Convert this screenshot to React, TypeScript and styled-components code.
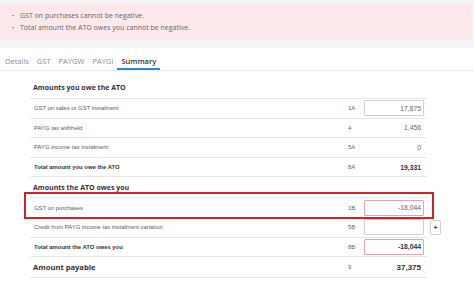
import styled, { createGlobalStyle } from 'styled-components'

const GlobalStyle = createGlobalStyle`
  html, body {
    margin: 0;
    padding: 0;
    background: #fff;
  }
  body {
    width: 474px;
    height: 285px;
    overflow: hidden;
    font-family: "Open Sans", "Liberation Sans", Arial, sans-serif;
  }
`

type Kind = 'input' | 'error' | 'plain'

type Item = {
  label: string
  code: string
  value: string
  kind: Kind
  total?: boolean
  plus?: boolean
  highlight?: boolean
}

const owe: Item[] = [
  { label: 'GST on sales or GST instalment', code: '1A', value: '17,875', kind: 'input' },
  { label: 'PAYG tax withheld', code: '4', value: '1,456', kind: 'plain' },
  { label: 'PAYG income tax instalment', code: '5A', value: '0', kind: 'plain' },
  { label: 'Total amount you owe the ATO', code: '8A', value: '19,331', kind: 'plain', total: true },
]

const owed: Item[] = [
  { label: 'GST on purchases', code: '1B', value: '-18,044', kind: 'error', highlight: true },
  { label: 'Credit from PAYG income tax instalment variation', code: '5B', value: '', kind: 'input', plus: true },
  { label: 'Total amount the ATO owes you', code: '8B', value: '-18,044', kind: 'error', total: true },
]

const tabs = ['Details', 'GST', 'PAYGW', 'PAYGI', 'Summary']

export default function App() {
  const renderRow = (item: Item) => (
    <Row key={item.code}>
      <RowLine>
        {item.highlight && <Highlight />}
        <Label $bold={item.total}>{item.label}</Label>
        <Code>{item.code}</Code>
        <ValueCell>
          {item.kind === 'plain' ? (
            <Plain $bold={item.total}>{item.value}</Plain>
          ) : (
            <Field $error={item.kind === 'error'} $bold={item.total}>
              {item.value}
            </Field>
          )}
        </ValueCell>
      </RowLine>
      <Side>{item.plus && <PlusButton>+</PlusButton>}</Side>
    </Row>
  )

  return (
    <Page>
      <GlobalStyle />
      <AlertArea>
        <Alert>
          <AlertList>
            <li>GST on purchases cannot be negative.</li>
            <li>Total amount the ATO owes you cannot be negative.</li>
          </AlertList>
        </Alert>
      </AlertArea>

      <TabBar>
        {tabs.map((t) => (
          <Tab key={t} $active={t === 'Summary'}>
            {t}
          </Tab>
        ))}
      </TabBar>

      <Panel>
        <Row>
          <Heading>Amounts you owe the ATO</Heading>
          <Side />
        </Row>
        {owe.map(renderRow)}
        <Row>
          <Heading $tall>Amounts the ATO owes you</Heading>
          <Side />
        </Row>
        {owed.map(renderRow)}
        <Row>
          <RowLine $tall>
            <BigLabel>Amount payable</BigLabel>
            <Code>9</Code>
            <ValueCell>
              <BigValue>37,375</BigValue>
            </ValueCell>
          </RowLine>
          <Side />
        </Row>
      </Panel>
    </Page>
  )
}

const Page = styled.div`
  width: 474px;
  height: 285px;
  overflow: hidden;
  background: #fff;
`

const AlertArea = styled.div`
  background: #f3f5f7;
  padding: 3px 2px 8px 0;
`

const Alert = styled.div`
  background: #fde9eb;
  height: 37px;
  display: flex;
  align-items: center;
`

const AlertList = styled.ul`
  margin: 0;
  padding: 0 0 0 12px;
  list-style: none;
  font-size: 7px;
  line-height: 11px;
  color: #666;

  li::before {
    content: '•';
    display: inline-block;
    width: 8px;
    font-size: 6px;
  }
`

const TabBar = styled.div`
  display: flex;
  padding-left: 1px;
  border-bottom: 1px solid #e6e8ea;
`

const Tab = styled.div<{ $active?: boolean }>`
  box-sizing: border-box;
  height: 22px;
  padding: 6px 4px 0;
  line-height: 14px;
  font-size: 7.5px;
  color: ${(p) => (p.$active ? '#333' : '#8a8f94')};
  font-weight: ${(p) => (p.$active ? 600 : 400)};
  border-bottom: 2px solid ${(p) => (p.$active ? '#2d8ccf' : 'transparent')};
`

const Panel = styled.div`
  margin: 6px 0 0 30px;
  width: 411px;
  display: flex;
  flex-direction: column;
`

const Row = styled.div`
  display: flex;
`

const Side = styled.div`
  width: 14px;
  display: flex;
  justify-content: flex-end;
  align-items: center;
`

const Heading = styled.div<{ $tall?: boolean }>`
  flex: 1;
  box-sizing: border-box;
  height: ${(p) => (p.$tall ? '21px' : '22px')};
  border-bottom: 1px solid #e6e6e6;
  padding-left: 3px;
  display: flex;
  align-items: center;
  font-size: 7px;
  font-weight: 700;
  color: #333;
`

const RowLine = styled.div<{ $tall?: boolean }>`
  position: relative;
  flex: 1;
  box-sizing: border-box;
  height: ${(p) => (p.$tall ? '21px' : '19.6px')};
  border-bottom: 1px solid #e6e6e6;
  display: flex;
  align-items: center;
`

const Highlight = styled.div`
  position: absolute;
  left: -6px;
  right: -7px;
  top: -6px;
  bottom: -2px;
  border: 2px solid #d4202c;
  pointer-events: none;
`

const Label = styled.div<{ $bold?: boolean }>`
  flex: 1;
  padding-left: 4px;
  font-family: "Liberation Sans", Arial, sans-serif;
  font-size: 5.9px;
  font-weight: ${(p) => (p.$bold ? 700 : 400)};
  color: ${(p) => (p.$bold ? '#333' : '#5a5a5a')};
`

const BigLabel = styled.div`
  flex: 1;
  padding-left: 3px;
  font-size: 7.6px;
  font-weight: 700;
  color: #333;
`

const Code = styled.div`
  width: 16px;
  padding-left: 1px;
  font-family: "Liberation Sans", Arial, sans-serif;
  font-size: 6px;
  color: #666;
`

const ValueCell = styled.div`
  width: 60px;
  margin-right: 3px;
  display: flex;
  justify-content: flex-end;
`

const Plain = styled.div<{ $bold?: boolean }>`
  padding-right: 3px;
  font-family: "Liberation Sans", Arial, sans-serif;
  font-size: 6.8px;
  font-weight: ${(p) => (p.$bold ? 700 : 400)};
  color: ${(p) => (p.$bold ? '#333' : '#666')};
`

const Field = styled.div<{ $error?: boolean; $bold?: boolean }>`
  box-sizing: border-box;
  width: 60px;
  height: 16px;
  border: 1px solid ${(p) => (p.$error ? '#e7a2aa' : '#cfcfcf')};
  border-radius: 1px;
  background: #fff;
  padding-right: 2px;
  display: flex;
  align-items: center;
  justify-content: flex-end;
  font-family: "Liberation Sans", Arial, sans-serif;
  font-size: 6.8px;
  font-weight: ${(p) => (p.$bold ? 700 : 400)};
  color: ${(p) => (p.$bold ? '#333' : '#666')};
`

const BigValue = styled.div`
  padding-right: 3px;
  font-family: "Liberation Sans", Arial, sans-serif;
  font-size: 8px;
  font-weight: 700;
  color: #333;
`

const PlusButton = styled.div`
  box-sizing: border-box;
  width: 11px;
  height: 15px;
  border: 1px solid #cfcfcf;
  border-radius: 2px;
  background: #fff;
  display: flex;
  align-items: center;
  justify-content: center;
  font-family: "Liberation Sans", Arial, sans-serif;
  font-size: 7px;
  font-weight: 700;
  color: #444;
`
